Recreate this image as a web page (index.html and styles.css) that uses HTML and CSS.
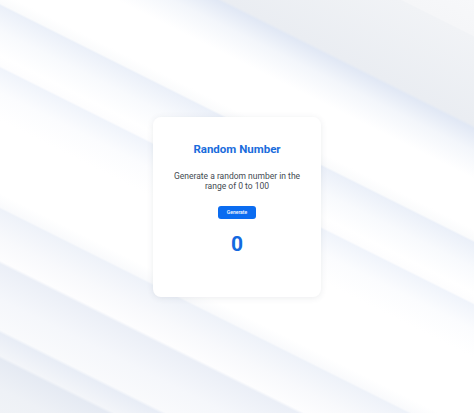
FILE: index.html
```html
<!DOCTYPE html>
<html lang="en">
<head>
<meta charset="utf-8">
<title>Random Number</title>
<link rel="stylesheet" href="styles.css">
</head>
<body>
<main class="card">
  <h1 class="title">Random Number</h1>
  <p class="desc">Generate a random number in the range of 0 to 100</p>
  <button class="btn" type="button">Generate</button>
  <div class="result">0</div>
</main>
</body>
</html>
```

FILE: styles.css
```css
html, body {
  margin: 0;
  padding: 0;
}
body {
  width: 474px;
  height: 413px;
  display: flex;
  align-items: center;
  justify-content: center;
  font-family: Roboto, "Liberation Sans", sans-serif;
  background:
    linear-gradient(206.57deg,
      #f7f8fa 0px, #f5f6f8 32px,
      #f1f3f6 33px, #eaedf2 112px,
      #e1e8f5 115px, #f3f6fb 135px, #ffffff 160px,
      #ffffff 205px, #fafbfc 215px,
      #ebf0f9 217px, #f8fafd 240px, #ffffff 262px,
      #fdfdfe 271px,
      #f0f4fb 273px, #fbfcfe 295px, #ffffff 320px,
      #ffffff 385px, #f9fafc 397px,
      #eef2f9 399px, #f8f9fc 425px, #fdfdfe 445px,
      #ebeff7 448px, #f5f7fb 480px, #f9fafc 507px,
      #e8edf6 510px, #f3f5f9 530px,
      #e5eaf3 533px, #eef1f6 560px, #f2f4f7 600px);
}
.card {
  box-sizing: border-box;
  width: 168px;
  height: 180px;
  background: #ffffff;
  border-radius: 8px;
  box-shadow: 0 1px 6px rgba(60, 70, 90, 0.10);
  padding-top: 25px;
  display: flex;
  flex-direction: column;
  align-items: center;
  text-align: center;
}
.title {
  margin: 0;
  font-size: 11.5px;
  line-height: 14px;
  font-weight: 700;
  color: #1a6cdc;
}
.desc {
  margin: 15px 0 0;
  width: 140px;
  font-size: 8.5px;
  line-height: 10px;
  color: #444a52;
}
.btn {
  margin-top: 15px;
  width: 38px;
  height: 13.5px;
  padding: 0;
  border: none;
  border-radius: 3px;
  background: #0b6cf0;
  color: #ffffff;
  font-family: Roboto, "Liberation Sans", sans-serif;
  font-size: 5px;
  line-height: 13.5px;
  font-weight: 500;
}
.result {
  margin-top: 13px;
  font-size: 21px;
  line-height: 24px;
  font-weight: 700;
  color: #1469e0;
}
```
